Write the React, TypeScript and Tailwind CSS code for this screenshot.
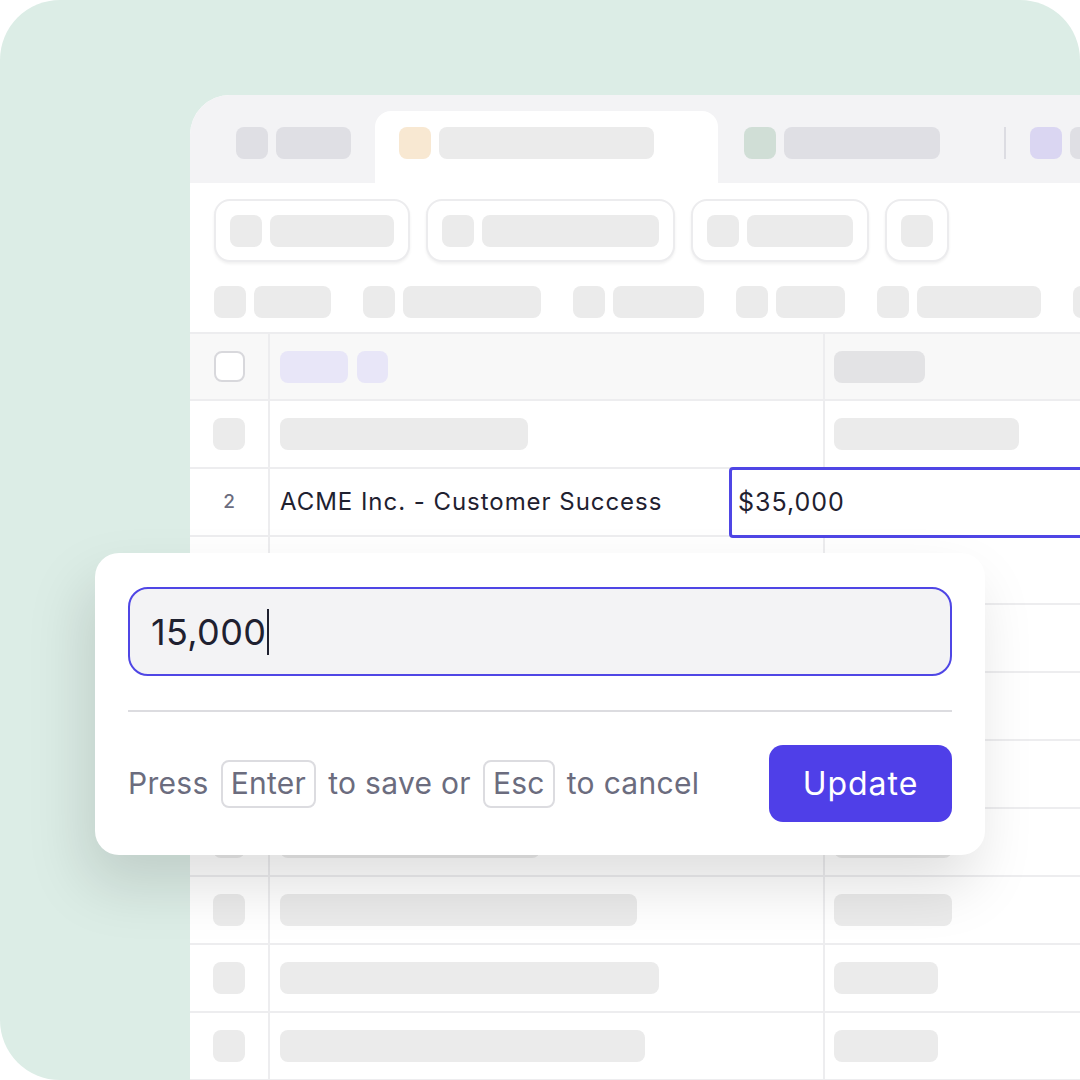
import React from "react";

const font = { fontFamily: "Inter, 'Noto Sans', sans-serif" };

function Sq({ c = "bg-[#ebebeb]" }: { c?: string }) {
  return <div className={`w-[32px] h-[32px] rounded-[8px] shrink-0 ${c}`} />;
}

function Bar({ w, c = "bg-[#ebebeb]" }: { w: number; c?: string }) {
  return <div className={`h-[32px] rounded-[8px] shrink-0 ${c}`} style={{ width: w }} />;
}

function Pill({ bar }: { bar?: number }) {
  return (
    <div className="h-[63px] flex items-center gap-[8px] px-[14px] rounded-[16px] border-2 border-[#ececee] bg-white shadow-[0_2px_3px_rgba(0,0,0,0.06)] shrink-0">
      <Sq />
      {bar ? <Bar w={bar} /> : null}
    </div>
  );
}

type RowData = { a: number; b: number };

function Row({ a, b }: RowData) {
  return (
    <div className="flex h-[68px] border-b-2 border-[#ededef]">
      <div className="w-[80px] shrink-0 border-r-2 border-[#ededef] flex items-center justify-center">
        <Sq />
      </div>
      <div className="w-[555px] shrink-0 border-r-2 border-[#ededef] flex items-center pl-[10px]">
        <Bar w={a} />
      </div>
      <div className="flex-1 flex items-center pl-[9px]">
        <Bar w={b} />
      </div>
    </div>
  );
}

export default function App() {
  return (
    <div className="w-[1080px] h-[1080px] relative overflow-hidden bg-white" style={font}>
      <div className="w-[1080px] h-[1080px] rounded-[60px] bg-[#dcede6] pt-[95px] pl-[190px]">
        <div className="w-[1000px] h-[1100px] bg-white rounded-tl-[40px] overflow-hidden">
          {/* tab bar */}
          <div className="h-[88px] bg-[#f3f3f5] flex items-end">
            <div className="w-[185px] h-[72px] flex items-start pt-[16px] pl-[46px] gap-[8px]">
              <Sq c="bg-[#dfdfe4]" />
              <Bar w={75} c="bg-[#dfdfe4]" />
            </div>
            <div className="w-[343px] h-[72px] bg-white rounded-t-[16px] flex items-start pt-[16px] pl-[24px] gap-[8px]">
              <Sq c="bg-[#f8e8d2]" />
              <Bar w={215} c="bg-[#ebebeb]" />
            </div>
            <div className="h-[72px] flex items-start pt-[16px] pl-[26px] gap-[8px]">
              <Sq c="bg-[#d0ded6]" />
              <Bar w={156} c="bg-[#dfdfe4]" />
              <div className="w-[2px] h-[32px] bg-[#dcdce2] ml-[56px] mr-[16px]" />
              <Sq c="bg-[#dad6f2]" />
              <Bar w={60} c="bg-[#dfdfe4]" />
            </div>
          </div>
          {/* toolbar */}
          <div className="h-[151px] border-b-2 border-[#ededef] pt-[16px] pl-[24px]">
            <div className="flex gap-[16px]">
              <Pill bar={124} />
              <Pill bar={177} />
              <Pill bar={106} />
              <Pill />
            </div>
            <div className="flex gap-[32px] mt-[24px]">
              {[77, 138, 91, 69, 124, 60].map((w, i) => (
                <div key={i} className="flex gap-[8px]">
                  <Sq />
                  <Bar w={w} />
                </div>
              ))}
            </div>
          </div>
          {/* table */}
          <div className="relative">
            <div className="flex h-[67px] bg-[#f8f8f8] border-b-2 border-[#ededef]">
              <div className="w-[80px] shrink-0 border-r-2 border-[#ededef] flex items-center justify-center">
                <div className="w-[31px] h-[31px] rounded-[8px] border-2 border-[#d8d8dc] bg-white" />
              </div>
              <div className="w-[555px] shrink-0 border-r-2 border-[#ededef] flex items-center pl-[10px] gap-[9px]">
                <Bar w={68} c="bg-[#e8e6f8]" />
                <Bar w={31} c="bg-[#e8e6f8]" />
              </div>
              <div className="flex-1 flex items-center pl-[9px]">
                <Bar w={91} c="bg-[#e3e3e5]" />
              </div>
            </div>
            <Row a={248} b={185} />
            <div className="flex h-[68px] border-b-2 border-[#ededef] relative">
              <div className="w-[80px] shrink-0 border-r-2 border-[#ededef] flex items-center justify-center text-[19px] font-medium text-[#6b6c7e]">
                2
              </div>
              <div className="w-[555px] shrink-0 border-r-2 border-[#ededef] flex items-center pl-[10px] text-[24px] tracking-[0.04em] text-[#1f2130]">
                ACME Inc. - Customer Success
              </div>
              <div className="flex-1" />
              <div className="absolute left-[539px] top-[-2px] w-[500px] h-[71px] border-[3px] border-[#4f46e5] rounded-[4px] bg-white flex items-center pl-[6px] text-[25px] tracking-[0.04em] text-[#1f2130]">
                $35,000
              </div>
            </div>
            <Row a={248} b={120} />
            <Row a={300} b={130} />
            <Row a={280} b={120} />
            <Row a={320} b={130} />
            <Row a={260} b={118} />
            <Row a={357} b={118} />
            <Row a={379} b={104} />
            <Row a={365} b={104} />
          </div>
        </div>
      </div>

      {/* popover */}
      <div className="absolute left-[95px] top-[553px] w-[890px] h-[302px] bg-white rounded-[24px] shadow-[-10px_30px_60px_rgba(0,0,0,0.13)] px-[33px] pt-[34px]">
        <div className="h-[89px] rounded-[20px] border-2 border-[#4f46e5] bg-[#f3f3f5] flex items-center pl-[21px] text-[36px] tracking-[0.01em] text-[#1f2130]">
          <span>15,000</span>
          <span className="w-[2px] h-[46px] bg-[#1f2130] ml-[1px]" />
        </div>
        <div className="h-[2px] bg-[#dcdce0] mt-[34px]" />
        <div className="flex items-center justify-between mt-[33px]">
          <div className="flex items-center gap-[12px] text-[30px] tracking-[0.01em] text-[#6b6c7e]">
            <span>Press</span>
            <span className="h-[48px] px-[8px] flex items-center rounded-[8px] border-2 border-[#dcdce0]">Enter</span>
            <span>to save or</span>
            <span className="h-[48px] px-[8px] flex items-center rounded-[8px] border-2 border-[#dcdce0]">Esc</span>
            <span>to cancel</span>
          </div>
          <div className="w-[183px] h-[77px] rounded-[14px] bg-[#4f3fe8] flex items-center justify-center text-white text-[32px] tracking-[0.03em]">
            Update
          </div>
        </div>
      </div>
    </div>
  );
}
